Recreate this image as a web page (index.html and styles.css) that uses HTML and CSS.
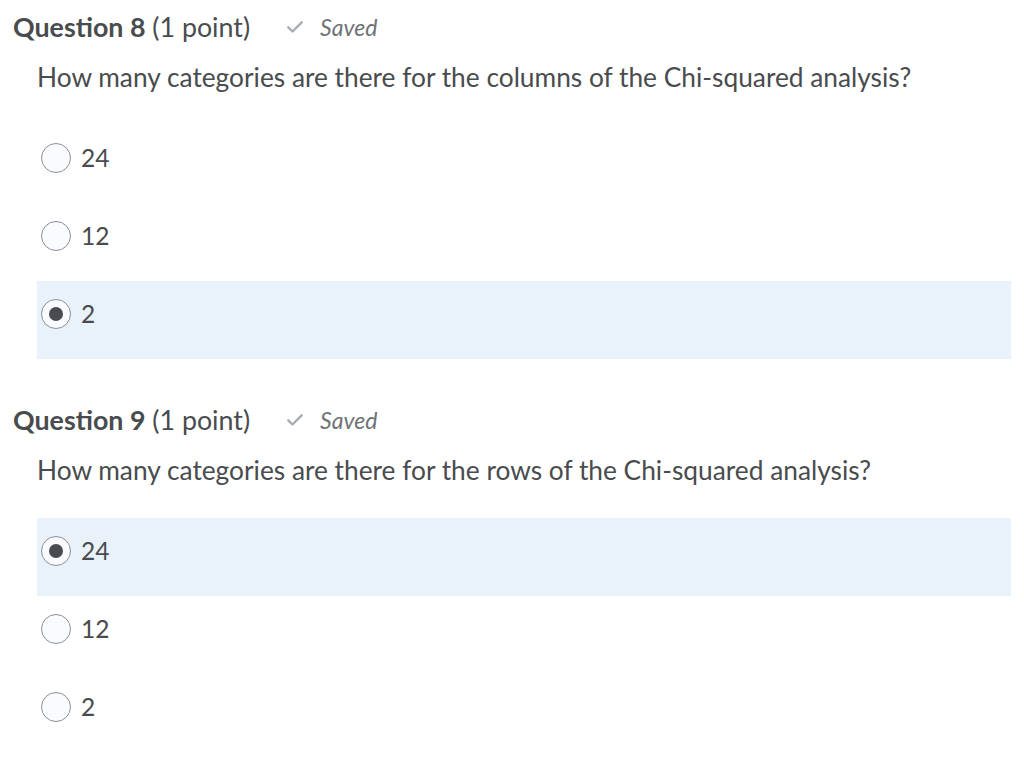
FILE: index.html
```html
<!DOCTYPE html>
<html>
<head>
<meta charset="utf-8">
<link rel="stylesheet" href="styles.css">
</head>
<body>
<div class="quiz">
  <section class="question">
    <div class="q-head">
      <h2 class="q-title"><strong>Question 8</strong> (1 point)</h2>
      <span class="saved">
        <svg class="check" viewBox="0 0 16 12" width="16" height="12"><path d="M1.3 6.3 L5.5 10.5 L14.7 1.3" fill="none" stroke="#a8adb1" stroke-width="2.4" stroke-linecap="round" stroke-linejoin="round"/></svg>
        <em>Saved</em>
      </span>
    </div>
    <p class="q-text">How many categories are there for the columns of the Chi-squared analysis?</p>
    <div class="options">
      <label class="option"><span class="radio"></span><span class="opt-label">24</span></label>
      <label class="option"><span class="radio"></span><span class="opt-label">12</span></label>
      <label class="option selected"><span class="radio"></span><span class="opt-label">2</span></label>
    </div>
  </section>
  <section class="question">
    <div class="q-head">
      <h2 class="q-title"><strong>Question 9</strong> (1 point)</h2>
      <span class="saved">
        <svg class="check" viewBox="0 0 16 12" width="16" height="12"><path d="M1.3 6.3 L5.5 10.5 L14.7 1.3" fill="none" stroke="#a8adb1" stroke-width="2.4" stroke-linecap="round" stroke-linejoin="round"/></svg>
        <em>Saved</em>
      </span>
    </div>
    <p class="q-text">How many categories are there for the rows of the Chi-squared analysis?</p>
    <div class="options">
      <label class="option selected"><span class="radio"></span><span class="opt-label">24</span></label>
      <label class="option"><span class="radio"></span><span class="opt-label">12</span></label>
      <label class="option"><span class="radio"></span><span class="opt-label">2</span></label>
    </div>
  </section>
</div>
</body>
</html>
```

FILE: styles.css
```css
html, body {
  margin: 0;
  padding: 0;
  background: #ffffff;
}
body {
  font-family: Lato, "Open Sans", sans-serif;
  color: #494c4e;
}
.quiz {
  padding: 12px 13px 0 13px;
}
.question {
  margin-bottom: 46px;
}
.q-head {
  display: flex;
  align-items: center;
  height: 30px;
}
.q-title {
  margin: 0;
  font-size: 26.8px;
  font-weight: 400;
  line-height: 30px;
  white-space: nowrap;
}
.q-title strong {
  font-weight: 700;
}
.saved {
  display: flex;
  align-items: center;
  margin-left: 37px;
  color: #6e7376;
  font-size: 23px;
}
.check {
  display: block;
  margin-right: 17px;
}
.saved em {
  font-style: italic;
}
.q-text {
  margin: 20px 0 0 24px;
  font-size: 26.3px;
  line-height: 30px;
  white-space: nowrap;
}
.options {
  margin: 33px 0 0 24px;
}
.option {
  display: flex;
  align-items: flex-start;
  height: 78px;
  box-sizing: border-box;
  padding: 18px 0 0 4px;
}
.option.selected {
  background: #e9f1fb;
}
.radio {
  width: 30px;
  height: 30px;
  box-sizing: border-box;
  border: 1px solid #8a9094;
  border-radius: 50%;
  background: #f9fbff;
  display: flex;
  align-items: center;
  justify-content: center;
  flex: none;
}
.selected .radio::after {
  content: "";
  width: 14px;
  height: 14px;
  border-radius: 50%;
  background: #494c4e;
}
.opt-label {
  margin-left: 10px;
  font-size: 24.5px;
  line-height: 30px;
}
```
